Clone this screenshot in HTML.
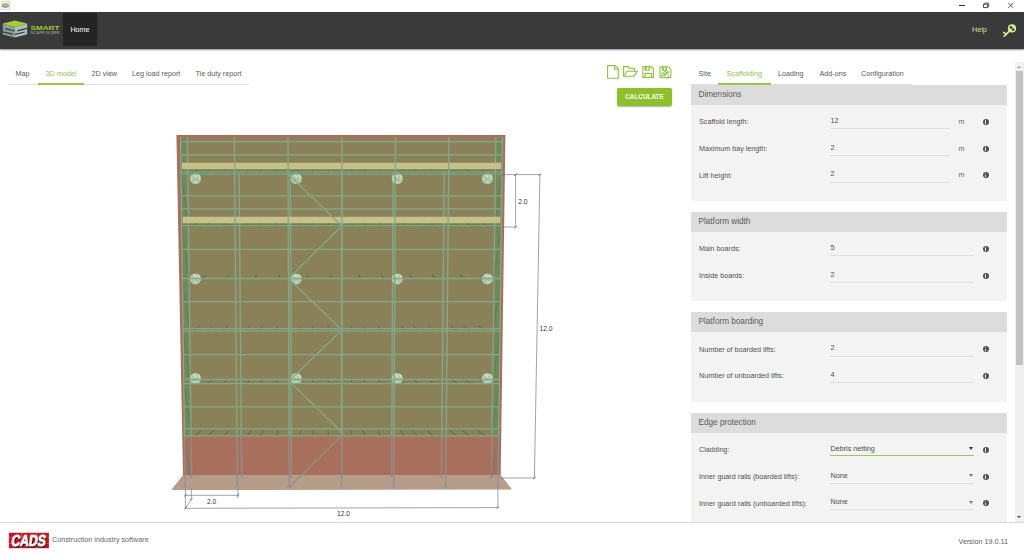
<!DOCTYPE html>
<html><head><meta charset="utf-8">
<style>
*{box-sizing:border-box;margin:0;padding:0}
html,body{width:1024px;height:555px;overflow:hidden;background:#fff;font-family:"Liberation Sans",sans-serif;color:#555;position:relative}
.a{position:absolute;white-space:nowrap}
#hdr{left:0;top:12px;width:1024px;height:37px;background:#3a3a3a;box-shadow:0 1px 1.5px rgba(0,0,0,.45)}
#home{left:63px;top:13px;width:34px;height:33px;background:#242424;color:#fff;font-size:7.2px;line-height:33px;text-align:center}
.tab{font-size:7.2px;color:#5a5a5a;line-height:10px}
.tab.on{color:#93c152}
.line{height:1px;background:#e2e2e2}
.gl{height:2px;background:#96c845}
.sec{left:691px;width:316px;background:#f3f3f3}
.sh{position:absolute;left:0;top:0;width:316px;height:20px;background:#dcdcdc;font-size:8.2px;color:#5a5a5a;line-height:20px;padding-left:7.5px}
.lab{font-size:7.2px;color:#505050;line-height:10px}
.val{font-size:7.2px;color:#4a4a4a;line-height:10px}
.ul{height:1px;background:#dedede}
.unit{font-size:7.2px;color:#666;line-height:10px}
.info{width:6.2px;height:6.2px;border-radius:50%;background:#505050;}
.info::before{content:"";position:absolute;left:2.6px;top:1.1px;width:1px;height:1px;background:#e8e8e8;border-radius:50%}
.info::after{content:"";position:absolute;left:2.6px;top:2.5px;width:1px;height:2.7px;background:#e8e8e8}
.arr{width:0;height:0;border-left:2.5px solid transparent;border-right:2.5px solid transparent;border-top:3px solid #333}
</style></head><body>
<!-- title bar -->
<div class="a" style="left:1px;top:1px;width:9px;height:9px;border:1px solid #dcdcdc;background:#fff"></div>
<div class="a" style="left:2px;top:2.5px;width:7px;height:5.5px;background:#9aaaae;border-top:2.2px solid #a6cf3a;border-radius:40%/30%"></div>
<div class="a" style="left:959.3px;top:5px;width:5.6px;height:0.9px;background:#333"></div>
<svg class="a" style="left:980px;top:0" width="44" height="12" viewBox="980 0 44 12">
<path d="M983.4 4.2H987.6V7.6H983.4Z" stroke="#333" stroke-width="0.9" fill="none"/>
<path d="M984.4 4.1V3.1H988.7V6.5H987.7" stroke="#333" stroke-width="0.8" fill="none"/>
<path d="M1008.2 2.9L1013.4 7.9M1013.4 2.9L1008.2 7.9" stroke="#333" stroke-width="0.8"/>
</svg>
<!-- header -->
<div class="a" id="hdr"></div>
<div class="a" id="home">Home</div>
<div class="a" style="left:972px;top:25px;font-size:7.2px;color:#d2e48c;line-height:10px">Help</div>

<!-- left tabs -->
<div class="a tab" style="left:15.5px;top:68.5px">Map</div>
<div class="a tab on" style="left:45.5px;top:68.5px">3D model</div>
<div class="a tab" style="left:91.5px;top:68.5px">2D view</div>
<div class="a tab" style="left:132px;top:68.5px">Leg load report</div>
<div class="a tab" style="left:195.5px;top:68.5px">Tie duty report</div>
<div class="a line" style="left:8px;top:84px;width:241px"></div>
<div class="a gl" style="left:38px;top:83px;width:46px"></div>

<!-- right tabs -->
<div class="a tab" style="left:698.5px;top:68.5px">Site</div>
<div class="a tab on" style="left:726.5px;top:68.5px">Scaffolding</div>
<div class="a tab" style="left:778px;top:68.5px">Loading</div>
<div class="a tab" style="left:819.5px;top:68.5px">Add-ons</div>
<div class="a tab" style="left:861px;top:68.5px">Configuration</div>
<div class="a line" style="left:690px;top:84px;width:222px"></div>
<div class="a gl" style="left:718px;top:83px;width:53px"></div>

<!-- calculate -->
<div class="a" style="left:617px;top:87.5px;width:55px;height:18.5px;background:#8cc12b;border-radius:2px;box-shadow:0 1px 1.5px rgba(0,0,0,.3);color:#fff;font-size:6.4px;line-height:18.5px;text-align:center;font-weight:bold">CALCULATE</div>

<!-- scaffold -->
<svg class="a" style="left:0;top:0" width="1024" height="555" viewBox="0 0 1024 555" font-family="Liberation Sans, sans-serif">
<polygon points="176.4,135 505.4,135 500.7,475 183,475" fill="#a8705c"/>
<polygon points="183,475 500.7,475 512,489.5 171.3,490" fill="#b89c8a"/>
<polygon points="180,138.5 502.2,138.5 499.2,436.3 184.2,436.3" fill="#8a8158"/>
<polygon points="180.5,139 187.3,139 191.1,436 184.5,436" fill="#74875a"/>
<polygon points="495.7,139 502.5,139 498.6,436 492.0,436" fill="#74875a"/>
<line x1="181.7" y1="226" x2="189.1" y2="279" stroke="#5e7d58" stroke-width="0.9"/>
<line x1="501.3" y1="226" x2="494.0" y2="279" stroke="#5e7d58" stroke-width="0.9"/>
<line x1="182.4" y1="279" x2="189.7" y2="330" stroke="#5e7d58" stroke-width="0.9"/>
<line x1="500.6" y1="279" x2="493.3" y2="330" stroke="#5e7d58" stroke-width="0.9"/>
<line x1="183.1" y1="330" x2="190.4" y2="381" stroke="#5e7d58" stroke-width="0.9"/>
<line x1="500.0" y1="330" x2="492.7" y2="381" stroke="#5e7d58" stroke-width="0.9"/>
<line x1="183.8" y1="381" x2="191.1" y2="432" stroke="#5e7d58" stroke-width="0.9"/>
<line x1="499.3" y1="381" x2="492.0" y2="432" stroke="#5e7d58" stroke-width="0.9"/>
<line x1="181.0" y1="174" x2="188.4" y2="226" stroke="#5e7d58" stroke-width="0.9"/>
<line x1="502.0" y1="174" x2="494.6" y2="226" stroke="#5e7d58" stroke-width="0.9"/>
<rect x="182" y="169.3" width="319" height="5.5" fill="#6f7f52"/>
<rect x="183" y="223.3" width="317" height="3.5" fill="#6f7f52"/>
<line x1="191.1" y1="436" x2="191.7" y2="478" stroke="#8e8e8e" stroke-width="1.2"/>
<rect x="189.7" y="477" width="4" height="1.4" fill="#9a9a9a"/>
<line x1="241.3" y1="436" x2="241.7" y2="478" stroke="#8e8e8e" stroke-width="1.2"/>
<rect x="239.7" y="477" width="4" height="1.4" fill="#9a9a9a"/>
<line x1="291.3" y1="436" x2="291.5" y2="478" stroke="#8e8e8e" stroke-width="1.2"/>
<rect x="289.5" y="477" width="4" height="1.4" fill="#9a9a9a"/>
<line x1="341.7" y1="436" x2="341.6" y2="478" stroke="#8e8e8e" stroke-width="1.2"/>
<rect x="339.6" y="477" width="4" height="1.4" fill="#9a9a9a"/>
<line x1="391.8" y1="436" x2="391.6" y2="478" stroke="#8e8e8e" stroke-width="1.2"/>
<rect x="389.6" y="477" width="4" height="1.4" fill="#9a9a9a"/>
<line x1="441.8" y1="436" x2="441.4" y2="478" stroke="#8e8e8e" stroke-width="1.2"/>
<rect x="439.4" y="477" width="4" height="1.4" fill="#9a9a9a"/>
<line x1="492.0" y1="436" x2="491.5" y2="478" stroke="#8e8e8e" stroke-width="1.2"/>
<rect x="489.5" y="477" width="4" height="1.4" fill="#9a9a9a"/>
<line x1="184" y1="437" x2="190.2" y2="476" stroke="#777" stroke-width="1"/>
<line x1="498" y1="437" x2="491.4" y2="477" stroke="#777" stroke-width="1"/>
<line x1="187.3" y1="137" x2="191.1" y2="436" stroke="#83a98a" stroke-width="1.3"/>
<line x1="239.1" y1="172" x2="241.3" y2="436" stroke="#83a98a" stroke-width="1.3"/>
<line x1="290.4" y1="172" x2="291.3" y2="436" stroke="#83a98a" stroke-width="1.3"/>
<line x1="342.0" y1="172" x2="341.7" y2="436" stroke="#83a98a" stroke-width="1.3"/>
<line x1="393.1" y1="172" x2="391.8" y2="436" stroke="#83a98a" stroke-width="1.3"/>
<line x1="444.2" y1="172" x2="441.8" y2="436" stroke="#83a98a" stroke-width="1.3"/>
<line x1="495.8" y1="137" x2="492.0" y2="436" stroke="#83a98a" stroke-width="1.3"/>
<line x1="191.7" y1="174.1" x2="196.9" y2="169.6" stroke="#4f7a56" stroke-width="1.1"/>
<line x1="205.1" y1="174.1" x2="209.8" y2="169.6" stroke="#4f7a56" stroke-width="1.1"/>
<line x1="221.2" y1="174.1" x2="225.2" y2="169.6" stroke="#4f7a56" stroke-width="1.1"/>
<line x1="245.3" y1="174.1" x2="248.3" y2="169.6" stroke="#4f7a56" stroke-width="1.1"/>
<line x1="258.7" y1="174.1" x2="261.2" y2="169.6" stroke="#4f7a56" stroke-width="1.1"/>
<line x1="274.8" y1="174.1" x2="276.6" y2="169.6" stroke="#4f7a56" stroke-width="1.1"/>
<line x1="298.9" y1="174.1" x2="299.8" y2="169.6" stroke="#4f7a56" stroke-width="1.1"/>
<line x1="312.4" y1="174.1" x2="312.7" y2="169.6" stroke="#4f7a56" stroke-width="1.1"/>
<line x1="328.5" y1="174.1" x2="328.2" y2="169.6" stroke="#4f7a56" stroke-width="1.1"/>
<line x1="352.6" y1="174.1" x2="351.3" y2="169.6" stroke="#4f7a56" stroke-width="1.1"/>
<line x1="366.0" y1="174.1" x2="364.1" y2="169.6" stroke="#4f7a56" stroke-width="1.1"/>
<line x1="382.0" y1="174.1" x2="379.5" y2="169.6" stroke="#4f7a56" stroke-width="1.1"/>
<line x1="406.0" y1="174.1" x2="402.5" y2="169.6" stroke="#4f7a56" stroke-width="1.1"/>
<line x1="419.3" y1="174.1" x2="415.3" y2="169.6" stroke="#4f7a56" stroke-width="1.1"/>
<line x1="435.3" y1="174.1" x2="430.7" y2="169.6" stroke="#4f7a56" stroke-width="1.1"/>
<line x1="459.3" y1="174.1" x2="453.7" y2="169.6" stroke="#4f7a56" stroke-width="1.1"/>
<line x1="472.7" y1="174.1" x2="466.5" y2="169.6" stroke="#4f7a56" stroke-width="1.1"/>
<line x1="488.7" y1="174.1" x2="481.9" y2="169.6" stroke="#4f7a56" stroke-width="1.1"/>
<line x1="192.4" y1="226.5" x2="197.5" y2="222.0" stroke="#4f7a56" stroke-width="1.1"/>
<line x1="205.7" y1="226.5" x2="210.3" y2="222.0" stroke="#4f7a56" stroke-width="1.1"/>
<line x1="221.7" y1="226.5" x2="225.7" y2="222.0" stroke="#4f7a56" stroke-width="1.1"/>
<line x1="245.7" y1="226.5" x2="248.7" y2="222.0" stroke="#4f7a56" stroke-width="1.1"/>
<line x1="259.0" y1="226.5" x2="261.5" y2="222.0" stroke="#4f7a56" stroke-width="1.1"/>
<line x1="275.0" y1="226.5" x2="276.8" y2="222.0" stroke="#4f7a56" stroke-width="1.1"/>
<line x1="299.0" y1="226.5" x2="299.9" y2="222.0" stroke="#4f7a56" stroke-width="1.1"/>
<line x1="312.4" y1="226.5" x2="312.7" y2="222.0" stroke="#4f7a56" stroke-width="1.1"/>
<line x1="328.5" y1="226.5" x2="328.2" y2="222.0" stroke="#4f7a56" stroke-width="1.1"/>
<line x1="352.5" y1="226.5" x2="351.2" y2="222.0" stroke="#4f7a56" stroke-width="1.1"/>
<line x1="365.8" y1="226.5" x2="364.0" y2="222.0" stroke="#4f7a56" stroke-width="1.1"/>
<line x1="381.8" y1="226.5" x2="379.3" y2="222.0" stroke="#4f7a56" stroke-width="1.1"/>
<line x1="405.7" y1="226.5" x2="402.2" y2="222.0" stroke="#4f7a56" stroke-width="1.1"/>
<line x1="418.9" y1="226.5" x2="414.9" y2="222.0" stroke="#4f7a56" stroke-width="1.1"/>
<line x1="434.9" y1="226.5" x2="430.2" y2="222.0" stroke="#4f7a56" stroke-width="1.1"/>
<line x1="458.8" y1="226.5" x2="453.2" y2="222.0" stroke="#4f7a56" stroke-width="1.1"/>
<line x1="472.1" y1="226.5" x2="465.9" y2="222.0" stroke="#4f7a56" stroke-width="1.1"/>
<line x1="488.0" y1="226.5" x2="481.2" y2="222.0" stroke="#4f7a56" stroke-width="1.1"/>
<line x1="193.7" y1="331.2" x2="199.9" y2="325.7" stroke="#4f7a56" stroke-width="1.1"/>
<line x1="206.9" y1="331.2" x2="212.5" y2="325.7" stroke="#4f7a56" stroke-width="1.1"/>
<line x1="222.8" y1="331.2" x2="227.6" y2="325.7" stroke="#4f7a56" stroke-width="1.1"/>
<line x1="246.6" y1="331.2" x2="250.2" y2="325.7" stroke="#4f7a56" stroke-width="1.1"/>
<line x1="259.7" y1="331.2" x2="262.7" y2="325.7" stroke="#4f7a56" stroke-width="1.1"/>
<line x1="275.5" y1="331.2" x2="277.7" y2="325.7" stroke="#4f7a56" stroke-width="1.1"/>
<line x1="299.3" y1="331.2" x2="300.4" y2="325.7" stroke="#4f7a56" stroke-width="1.1"/>
<line x1="312.6" y1="331.2" x2="313.0" y2="325.7" stroke="#4f7a56" stroke-width="1.1"/>
<line x1="328.5" y1="331.2" x2="328.1" y2="325.7" stroke="#4f7a56" stroke-width="1.1"/>
<line x1="352.3" y1="331.2" x2="350.7" y2="325.7" stroke="#4f7a56" stroke-width="1.1"/>
<line x1="365.5" y1="331.2" x2="363.3" y2="325.7" stroke="#4f7a56" stroke-width="1.1"/>
<line x1="381.3" y1="331.2" x2="378.3" y2="325.7" stroke="#4f7a56" stroke-width="1.1"/>
<line x1="405.0" y1="331.2" x2="400.8" y2="325.7" stroke="#4f7a56" stroke-width="1.1"/>
<line x1="418.2" y1="331.2" x2="413.3" y2="325.7" stroke="#4f7a56" stroke-width="1.1"/>
<line x1="434.0" y1="331.2" x2="428.4" y2="325.7" stroke="#4f7a56" stroke-width="1.1"/>
<line x1="457.7" y1="331.2" x2="450.9" y2="325.7" stroke="#4f7a56" stroke-width="1.1"/>
<line x1="470.9" y1="331.2" x2="463.5" y2="325.7" stroke="#4f7a56" stroke-width="1.1"/>
<line x1="486.8" y1="331.2" x2="478.5" y2="325.7" stroke="#4f7a56" stroke-width="1.1"/>
<line x1="194.3" y1="383.8" x2="200.6" y2="378.3" stroke="#4f7a56" stroke-width="1.1"/>
<line x1="207.5" y1="383.8" x2="213.1" y2="378.3" stroke="#4f7a56" stroke-width="1.1"/>
<line x1="223.3" y1="383.8" x2="228.1" y2="378.3" stroke="#4f7a56" stroke-width="1.1"/>
<line x1="247.0" y1="383.8" x2="250.6" y2="378.3" stroke="#4f7a56" stroke-width="1.1"/>
<line x1="260.1" y1="383.8" x2="263.0" y2="378.3" stroke="#4f7a56" stroke-width="1.1"/>
<line x1="275.8" y1="383.8" x2="278.0" y2="378.3" stroke="#4f7a56" stroke-width="1.1"/>
<line x1="299.5" y1="383.8" x2="300.5" y2="378.3" stroke="#4f7a56" stroke-width="1.1"/>
<line x1="312.7" y1="383.8" x2="313.0" y2="378.3" stroke="#4f7a56" stroke-width="1.1"/>
<line x1="328.5" y1="383.8" x2="328.1" y2="378.3" stroke="#4f7a56" stroke-width="1.1"/>
<line x1="352.2" y1="383.8" x2="350.6" y2="378.3" stroke="#4f7a56" stroke-width="1.1"/>
<line x1="365.4" y1="383.8" x2="363.1" y2="378.3" stroke="#4f7a56" stroke-width="1.1"/>
<line x1="381.1" y1="383.8" x2="378.1" y2="378.3" stroke="#4f7a56" stroke-width="1.1"/>
<line x1="404.7" y1="383.8" x2="400.5" y2="378.3" stroke="#4f7a56" stroke-width="1.1"/>
<line x1="417.8" y1="383.8" x2="413.0" y2="378.3" stroke="#4f7a56" stroke-width="1.1"/>
<line x1="433.6" y1="383.8" x2="427.9" y2="378.3" stroke="#4f7a56" stroke-width="1.1"/>
<line x1="457.2" y1="383.8" x2="450.4" y2="378.3" stroke="#4f7a56" stroke-width="1.1"/>
<line x1="470.3" y1="383.8" x2="462.9" y2="378.3" stroke="#4f7a56" stroke-width="1.1"/>
<line x1="486.1" y1="383.8" x2="477.9" y2="378.3" stroke="#4f7a56" stroke-width="1.1"/>
<line x1="195.0" y1="436.0" x2="201.2" y2="430.5" stroke="#4f7a56" stroke-width="1.1"/>
<line x1="208.1" y1="436.0" x2="213.6" y2="430.5" stroke="#4f7a56" stroke-width="1.1"/>
<line x1="223.8" y1="436.0" x2="228.6" y2="430.5" stroke="#4f7a56" stroke-width="1.1"/>
<line x1="247.4" y1="436.0" x2="251.0" y2="430.5" stroke="#4f7a56" stroke-width="1.1"/>
<line x1="260.4" y1="436.0" x2="263.4" y2="430.5" stroke="#4f7a56" stroke-width="1.1"/>
<line x1="276.1" y1="436.0" x2="278.2" y2="430.5" stroke="#4f7a56" stroke-width="1.1"/>
<line x1="299.6" y1="436.0" x2="300.6" y2="430.5" stroke="#4f7a56" stroke-width="1.1"/>
<line x1="312.8" y1="436.0" x2="313.1" y2="430.5" stroke="#4f7a56" stroke-width="1.1"/>
<line x1="328.5" y1="436.0" x2="328.1" y2="430.5" stroke="#4f7a56" stroke-width="1.1"/>
<line x1="352.1" y1="436.0" x2="350.5" y2="430.5" stroke="#4f7a56" stroke-width="1.1"/>
<line x1="365.2" y1="436.0" x2="363.0" y2="430.5" stroke="#4f7a56" stroke-width="1.1"/>
<line x1="380.9" y1="436.0" x2="377.9" y2="430.5" stroke="#4f7a56" stroke-width="1.1"/>
<line x1="404.4" y1="436.0" x2="400.2" y2="430.5" stroke="#4f7a56" stroke-width="1.1"/>
<line x1="417.5" y1="436.0" x2="412.6" y2="430.5" stroke="#4f7a56" stroke-width="1.1"/>
<line x1="433.1" y1="436.0" x2="427.5" y2="430.5" stroke="#4f7a56" stroke-width="1.1"/>
<line x1="456.7" y1="436.0" x2="449.9" y2="430.5" stroke="#4f7a56" stroke-width="1.1"/>
<line x1="469.8" y1="436.0" x2="462.4" y2="430.5" stroke="#4f7a56" stroke-width="1.1"/>
<line x1="485.5" y1="436.0" x2="477.3" y2="430.5" stroke="#4f7a56" stroke-width="1.1"/>
<line x1="201.0" y1="279.5" x2="206.4" y2="274.5" stroke="#4f7a56" stroke-width="1.1"/>
<line x1="224.9" y1="279.5" x2="229.2" y2="274.5" stroke="#4f7a56" stroke-width="1.1"/>
<line x1="254.1" y1="279.5" x2="257.1" y2="274.5" stroke="#4f7a56" stroke-width="1.1"/>
<line x1="277.9" y1="279.5" x2="279.8" y2="274.5" stroke="#4f7a56" stroke-width="1.1"/>
<line x1="307.2" y1="279.5" x2="307.8" y2="274.5" stroke="#4f7a56" stroke-width="1.1"/>
<line x1="331.2" y1="279.5" x2="330.7" y2="274.5" stroke="#4f7a56" stroke-width="1.1"/>
<line x1="360.4" y1="279.5" x2="358.5" y2="274.5" stroke="#4f7a56" stroke-width="1.1"/>
<line x1="384.2" y1="279.5" x2="381.3" y2="274.5" stroke="#4f7a56" stroke-width="1.1"/>
<line x1="413.3" y1="279.5" x2="409.1" y2="274.5" stroke="#4f7a56" stroke-width="1.1"/>
<line x1="437.1" y1="279.5" x2="431.8" y2="274.5" stroke="#4f7a56" stroke-width="1.1"/>
<line x1="466.2" y1="279.5" x2="459.6" y2="274.5" stroke="#4f7a56" stroke-width="1.1"/>
<line x1="490.0" y1="279.5" x2="482.4" y2="274.5" stroke="#4f7a56" stroke-width="1.1"/>
<polygon points="181.8,162.8 501.2,162.8 501.1,169.3 181.9,169.3" fill="#c5c188"/>
<polygon points="182.6,216.8 500.5,216.8 500.4,223.3 182.6,223.3" fill="#c5c188"/>
<circle cx="195.5" cy="178.5" r="5.5" fill="#b6cfb2"/>
<path d="M192.0 175.5L199.0 181.5M199.0 175.5L192.0 181.5" stroke="#8fb08f" stroke-width="0.9"/>
<path d="M193.0 174.5L196.5 177.5M198.0 174.5L199.5 177.5" stroke="#d3e4cf" stroke-width="1.3"/>
<circle cx="296.3" cy="178.5" r="5.5" fill="#b6cfb2"/>
<path d="M292.8 175.5L299.8 181.5M299.8 175.5L292.8 181.5" stroke="#8fb08f" stroke-width="0.9"/>
<path d="M293.8 174.5L297.3 177.5M298.8 174.5L300.3 177.5" stroke="#d3e4cf" stroke-width="1.3"/>
<circle cx="397.3" cy="178.5" r="5.5" fill="#b6cfb2"/>
<path d="M393.8 175.5L400.8 181.5M400.8 175.5L393.8 181.5" stroke="#8fb08f" stroke-width="0.9"/>
<path d="M394.8 174.5L398.3 177.5M399.8 174.5L401.3 177.5" stroke="#d3e4cf" stroke-width="1.3"/>
<circle cx="487.4" cy="178.5" r="5.5" fill="#b6cfb2"/>
<path d="M483.9 175.5L490.9 181.5M490.9 175.5L483.9 181.5" stroke="#8fb08f" stroke-width="0.9"/>
<path d="M484.9 174.5L488.4 177.5M489.9 174.5L491.4 177.5" stroke="#d3e4cf" stroke-width="1.3"/>
<circle cx="195.5" cy="278.9" r="5.5" fill="#b6cfb2"/>
<path d="M192.0 275.9L199.0 281.9M199.0 275.9L192.0 281.9" stroke="#8fb08f" stroke-width="0.9"/>
<path d="M193.0 274.9L196.5 277.9M198.0 274.9L199.5 277.9" stroke="#d3e4cf" stroke-width="1.3"/>
<circle cx="296.3" cy="278.9" r="5.5" fill="#b6cfb2"/>
<path d="M292.8 275.9L299.8 281.9M299.8 275.9L292.8 281.9" stroke="#8fb08f" stroke-width="0.9"/>
<path d="M293.8 274.9L297.3 277.9M298.8 274.9L300.3 277.9" stroke="#d3e4cf" stroke-width="1.3"/>
<circle cx="397.3" cy="278.9" r="5.5" fill="#b6cfb2"/>
<path d="M393.8 275.9L400.8 281.9M400.8 275.9L393.8 281.9" stroke="#8fb08f" stroke-width="0.9"/>
<path d="M394.8 274.9L398.3 277.9M399.8 274.9L401.3 277.9" stroke="#d3e4cf" stroke-width="1.3"/>
<circle cx="487.4" cy="278.9" r="5.5" fill="#b6cfb2"/>
<path d="M483.9 275.9L490.9 281.9M490.9 275.9L483.9 281.9" stroke="#8fb08f" stroke-width="0.9"/>
<path d="M484.9 274.9L488.4 277.9M489.9 274.9L491.4 277.9" stroke="#d3e4cf" stroke-width="1.3"/>
<circle cx="195.5" cy="378.5" r="5.5" fill="#b6cfb2"/>
<path d="M192.0 375.5L199.0 381.5M199.0 375.5L192.0 381.5" stroke="#8fb08f" stroke-width="0.9"/>
<path d="M193.0 374.5L196.5 377.5M198.0 374.5L199.5 377.5" stroke="#d3e4cf" stroke-width="1.3"/>
<circle cx="296.3" cy="378.5" r="5.5" fill="#b6cfb2"/>
<path d="M292.8 375.5L299.8 381.5M299.8 375.5L292.8 381.5" stroke="#8fb08f" stroke-width="0.9"/>
<path d="M293.8 374.5L297.3 377.5M298.8 374.5L300.3 377.5" stroke="#d3e4cf" stroke-width="1.3"/>
<circle cx="397.3" cy="378.5" r="5.5" fill="#b6cfb2"/>
<path d="M393.8 375.5L400.8 381.5M400.8 375.5L393.8 381.5" stroke="#8fb08f" stroke-width="0.9"/>
<path d="M394.8 374.5L398.3 377.5M399.8 374.5L401.3 377.5" stroke="#d3e4cf" stroke-width="1.3"/>
<circle cx="487.4" cy="378.5" r="5.5" fill="#b6cfb2"/>
<path d="M483.9 375.5L490.9 381.5M490.9 375.5L483.9 381.5" stroke="#8fb08f" stroke-width="0.9"/>
<path d="M484.9 374.5L488.4 377.5M489.9 374.5L491.4 377.5" stroke="#d3e4cf" stroke-width="1.3"/>
<line x1="180.5" y1="141.7" x2="502.5" y2="141.7" stroke="#83a98a" stroke-width="1.3"/>
<line x1="180.7" y1="154.9" x2="502.3" y2="154.9" stroke="#83a98a" stroke-width="1.3"/>
<line x1="181.0" y1="171.8" x2="502.1" y2="171.8" stroke="#83a98a" stroke-width="1.3"/>
<line x1="181.0" y1="174.1" x2="502.0" y2="174.1" stroke="#83a98a" stroke-width="1.3"/>
<line x1="181.3" y1="195.8" x2="501.7" y2="195.8" stroke="#83a98a" stroke-width="1.3"/>
<line x1="181.5" y1="208.9" x2="501.6" y2="208.9" stroke="#83a98a" stroke-width="1.3"/>
<line x1="181.7" y1="225.7" x2="501.3" y2="225.7" stroke="#83a98a" stroke-width="1.3"/>
<line x1="182.0" y1="249.3" x2="501.0" y2="249.3" stroke="#83a98a" stroke-width="1.3"/>
<line x1="182.4" y1="278.5" x2="500.7" y2="278.5" stroke="#83a98a" stroke-width="1.3"/>
<line x1="182.7" y1="301.7" x2="500.3" y2="301.7" stroke="#83a98a" stroke-width="1.3"/>
<line x1="183.1" y1="328.6" x2="500.0" y2="328.6" stroke="#83a98a" stroke-width="1.3"/>
<line x1="183.1" y1="330.9" x2="500.0" y2="330.9" stroke="#83a98a" stroke-width="1.3"/>
<line x1="183.4" y1="354.7" x2="499.6" y2="354.7" stroke="#83a98a" stroke-width="1.3"/>
<line x1="183.7" y1="379.5" x2="499.3" y2="379.5" stroke="#83a98a" stroke-width="1.3"/>
<line x1="183.8" y1="383.6" x2="499.3" y2="383.6" stroke="#83a98a" stroke-width="1.3"/>
<line x1="184.1" y1="406.8" x2="499.0" y2="406.8" stroke="#83a98a" stroke-width="1.3"/>
<line x1="184.4" y1="428.8" x2="498.7" y2="428.8" stroke="#83a98a" stroke-width="1.3"/>
<line x1="184.5" y1="435.9" x2="498.6" y2="435.9" stroke="#83a98a" stroke-width="1.3"/>
<line x1="180.5" y1="137" x2="184.5" y2="436" stroke="#83a98a" stroke-width="1.3"/>
<line x1="184.5" y1="436" x2="185.2" y2="487.6" stroke="#8e8e8e" stroke-width="1.3"/>
<rect x="182.7" y="486.6" width="5" height="1.6" fill="#9a9a9a"/>
<line x1="234.3" y1="137" x2="236.9" y2="436" stroke="#83a98a" stroke-width="1.3"/>
<line x1="236.9" y1="436" x2="237.4" y2="487.6" stroke="#8e8e8e" stroke-width="1.3"/>
<rect x="234.9" y="486.6" width="5" height="1.6" fill="#9a9a9a"/>
<line x1="288.0" y1="137" x2="289.1" y2="436" stroke="#83a98a" stroke-width="1.3"/>
<line x1="289.1" y1="436" x2="289.3" y2="487.6" stroke="#8e8e8e" stroke-width="1.3"/>
<rect x="286.8" y="486.6" width="5" height="1.6" fill="#9a9a9a"/>
<line x1="342.0" y1="137" x2="341.7" y2="436" stroke="#83a98a" stroke-width="1.3"/>
<line x1="341.7" y1="436" x2="341.6" y2="487.6" stroke="#8e8e8e" stroke-width="1.3"/>
<rect x="339.1" y="486.6" width="5" height="1.6" fill="#9a9a9a"/>
<line x1="395.5" y1="137" x2="394.0" y2="436" stroke="#83a98a" stroke-width="1.3"/>
<line x1="394.0" y1="436" x2="393.7" y2="487.6" stroke="#8e8e8e" stroke-width="1.3"/>
<rect x="391.2" y="486.6" width="5" height="1.6" fill="#9a9a9a"/>
<line x1="449.0" y1="137" x2="446.2" y2="436" stroke="#83a98a" stroke-width="1.3"/>
<line x1="446.2" y1="436" x2="445.7" y2="487.6" stroke="#8e8e8e" stroke-width="1.3"/>
<rect x="443.2" y="486.6" width="5" height="1.6" fill="#9a9a9a"/>
<line x1="502.5" y1="137" x2="498.6" y2="436" stroke="#83a98a" stroke-width="1.3"/>
<line x1="498.6" y1="436" x2="497.9" y2="487.6" stroke="#8e8e8e" stroke-width="1.3"/>
<rect x="495.4" y="486.6" width="5" height="1.6" fill="#9a9a9a"/>
<line x1="288.1" y1="174" x2="341.9" y2="226" stroke="#83a98a" stroke-width="1.3"/>
<line x1="341.9" y1="226" x2="288.5" y2="278.5" stroke="#83a98a" stroke-width="1.3"/>
<line x1="288.5" y1="278.5" x2="341.8" y2="330" stroke="#83a98a" stroke-width="1.3"/>
<line x1="341.8" y1="330" x2="288.9" y2="381" stroke="#83a98a" stroke-width="1.3"/>
<line x1="288.9" y1="381" x2="341.7" y2="432" stroke="#83a98a" stroke-width="1.3"/>
<line x1="341.7" y1="436" x2="289.3" y2="487" stroke="#8e8e8e" stroke-width="1.3"/>
<g stroke="#666" stroke-width="0.6" fill="none">
<path d="M502.7 174.6H539.9M502.7 227H516M515.6 174.6V227"/>
<path d="M539.9 174.6L534.4 478M500.7 478H534.4"/>
<path d="M185.4 489V508.3M238 489V498M185.4 495.3H238M185.4 508.3L497.9 507.6M497.9 489V507.6M191.3 489V499.3L185.4 508.3"/>
<path d="M514.3000000000001 175.7L516.9 173.5" stroke-width="0.9"/>
<path d="M538.6 175.7L541.1999999999999 173.5" stroke-width="0.9"/>
<path d="M514.3000000000001 228.1L516.9 225.9" stroke-width="0.9"/>
<path d="M533.1 479.1L535.6999999999999 476.9" stroke-width="0.9"/>
<path d="M184.1 496.40000000000003L186.70000000000002 494.2" stroke-width="0.9"/>
<path d="M236.7 496.40000000000003L239.3 494.2" stroke-width="0.9"/>
<path d="M184.1 509.40000000000003L186.70000000000002 507.2" stroke-width="0.9"/>
<path d="M496.59999999999997 508.70000000000005L499.2 506.5" stroke-width="0.9"/>
<path d="M190.0 500.40000000000003L192.60000000000002 498.2" stroke-width="0.9"/>
</g>
<text x="518.2" y="204" font-size="6.7" fill="#333">2.0</text>
<text x="539.5" y="331" font-size="6.7" fill="#333">12.0</text>
<text x="207" y="503.5" font-size="6.7" fill="#333">2.0</text>
<text x="337" y="516" font-size="6.7" fill="#333">12.0</text>
</svg>
<!-- /scaffold -->
<!-- icons -->
<svg class="a" style="left:0;top:0" width="1024" height="555" viewBox="0 0 1024 555" font-family="Liberation Sans, sans-serif">
<!-- logo -->
<polygon points="2.8,23.6 14.9,26.9 14.9,37.4 2.8,34.5" fill="#86a0a0"/>
<polygon points="14.9,26.9 27.2,23.6 27.2,34.3 14.9,37.4" fill="#abbfbf"/>
<polygon points="2.8,23.6 14.9,20.4 27.2,23.6 14.9,26.9" fill="#a5cf2a"/>
<g stroke="#3a3a3a" stroke-width="1.15" fill="none">
<path d="M5 28.6L14.9 31.0M2.8 31.9L12.9 34.1"/>
<path d="M17.3 30.9L27.2 28.4M14.9 34.4L24.8 32.0"/>
</g>
<text x="30.6" y="29.9" font-size="6" font-weight="bold" fill="#a5cf2a" textLength="28.8" lengthAdjust="spacingAndGlyphs">SMART</text>
<text x="30.6" y="34" font-size="3.95" font-weight="bold" fill="#7e9494" textLength="28.8" lengthAdjust="spacingAndGlyphs">SCAFFOLDER</text>
<!-- key -->
<circle cx="1012" cy="28.4" r="4.1" fill="#d8ec8c"/>
<circle cx="1011.0" cy="27.4" r="1.35" fill="#3a3a3a"/>
<circle cx="1013.1" cy="29.5" r="1.35" fill="#3a3a3a"/>
<g stroke="#d8ec8c" fill="none" stroke-linecap="round">
<path d="M1009.6 30.9L1004.3 36.1" stroke-width="1.8"/>
<path d="M1006 34.2L1003.6 32.4" stroke-width="1.6"/>
</g>
<!-- file icons -->
<g stroke="#8dc23a" stroke-width="1.1" fill="none" stroke-linejoin="round">
<path d="M607.6 65.6H615.4L618.3 68.6V78.3H607.6Z"/>
<path d="M614.6 65.8V69.2H618.2"/>
<path d="M623.6 76.2V66.6H628.4L629.2 68.2H634.4V71"/>
<path d="M623.6 76.2L627 71.3H637.4L633.8 76.2Z"/>
<path d="M642.8 66.5H651L653.4 69V77.4H642.8Z"/>
<path d="M645 77.2V73.4H651.4V77.2"/>
<path d="M659.9 66.8H668.1L670.8 69.4V77.8H659.9Z"/>
<path d="M662 77.6V74L666.2 70.6"/>
</g>
<rect x="644.5" y="66.5" width="5.4" height="4.1" fill="#8dc23a"/>
<rect x="646.6" y="67.3" width="1.9" height="2.4" fill="#fff"/>
<rect x="661.8" y="66.8" width="5.2" height="4" fill="#8dc23a"/>
<rect x="663.8" y="67.6" width="1.8" height="2.2" fill="#fff"/>
<path d="M663.5 76L668.5 71.5" stroke="#8dc23a" stroke-width="1.8"/>
<path d="M664.5 77.6H668.8V74.3" stroke="#8dc23a" stroke-width="1" fill="none"/>
<!-- CADS -->
<rect x="8.9" y="532.8" width="40" height="15.4" fill="#d0121f"/>
<path d="M8.9 537.3H48.9M8.9 543.5H48.9" stroke="#e9858c" stroke-width="0.5"/>
<path d="M21.5 532.8V548.2M36.8 532.8V548.2" stroke="#ee9aa0" stroke-width="0.5"/>
<g transform="translate(0 546.6) skewX(-9) translate(0 -546.6)">
<text x="11.4" y="546.7" font-size="15.8" font-weight="bold" fill="#111" stroke="#111" stroke-width="0.7" textLength="34.5" lengthAdjust="spacingAndGlyphs">CADS</text>
<text x="10.6" y="545.9" font-size="15.8" font-weight="bold" fill="#fff" stroke="#fff" stroke-width="0.7" textLength="34.5" lengthAdjust="spacingAndGlyphs">CADS</text>
</g>
</svg>
<!-- /icons -->
<!-- right panel -->
<div class="a sec" style="top:85px;height:116px"><div class="sh">Dimensions</div></div>
<div class="a lab" style="left:699px;top:117.4px">Scaffold length:</div>
<div class="a val" style="left:830.5px;top:115.5px">12</div>
<div class="a ul" style="left:830px;top:128px;width:120px"></div>
<div class="a unit" style="left:958.5px;top:116.5px">m</div>
<div class="a info" style="left:982.8px;top:118.8px"></div>
<div class="a lab" style="left:699px;top:144.4px">Maximum bay length:</div>
<div class="a val" style="left:830.5px;top:142.5px">2</div>
<div class="a ul" style="left:830px;top:155px;width:120px"></div>
<div class="a unit" style="left:958.5px;top:143.5px">m</div>
<div class="a info" style="left:982.8px;top:145.8px"></div>
<div class="a lab" style="left:699px;top:170.9px">Lift height:</div>
<div class="a val" style="left:830.5px;top:169.0px">2</div>
<div class="a ul" style="left:830px;top:181.5px;width:120px"></div>
<div class="a unit" style="left:958.5px;top:170.0px">m</div>
<div class="a info" style="left:982.8px;top:172.3px"></div>
<div class="a sec" style="top:212px;height:89px"><div class="sh">Platform width</div></div>
<div class="a lab" style="left:699px;top:244.4px">Main boards:</div>
<div class="a val" style="left:830.5px;top:242.5px">5</div>
<div class="a ul" style="left:830px;top:255px;width:144px"></div>
<div class="a info" style="left:982.8px;top:245.8px"></div>
<div class="a lab" style="left:699px;top:271.4px">Inside boards:</div>
<div class="a val" style="left:830.5px;top:269.5px">2</div>
<div class="a ul" style="left:830px;top:282px;width:144px"></div>
<div class="a info" style="left:982.8px;top:272.8px"></div>
<div class="a sec" style="top:312px;height:90px"><div class="sh">Platform boarding</div></div>
<div class="a lab" style="left:699px;top:344.9px">Number of boarded lifts:</div>
<div class="a val" style="left:830.5px;top:343.0px">2</div>
<div class="a ul" style="left:830px;top:355.5px;width:144px"></div>
<div class="a info" style="left:982.8px;top:346.3px"></div>
<div class="a lab" style="left:699px;top:371.4px">Number of unboarded lifts:</div>
<div class="a val" style="left:830.5px;top:369.5px">4</div>
<div class="a ul" style="left:830px;top:382px;width:144px"></div>
<div class="a info" style="left:982.8px;top:372.8px"></div>
<div class="a sec" style="top:412.5px;height:110px"><div class="sh">Edge protection</div></div>
<div class="a lab" style="left:699px;top:445.4px">Cladding:</div>
<div class="a val" style="left:830.5px;top:443.5px">Debris netting</div>
<div class="a" style="left:830px;top:455px;width:144px;height:1.4px;background:#9ccc45"></div>
<div class="a arr" style="left:968.5px;top:447px"></div>
<div class="a info" style="left:982.8px;top:446.8px"></div>
<div class="a lab" style="left:699px;top:472.4px">Inner guard rails (boarded lifts):</div>
<div class="a val" style="left:830.5px;top:470.5px">None</div>
<div class="a ul" style="left:830px;top:482.5px;width:144px"></div>
<div class="a arr" style="left:968.5px;top:474px;border-top-color:#777"></div>
<div class="a info" style="left:982.8px;top:473.8px"></div>
<div class="a lab" style="left:699px;top:498.9px">Inner guard rails (unboarded lifts):</div>
<div class="a val" style="left:830.5px;top:497.0px">None</div>
<div class="a ul" style="left:830px;top:509.0px;width:144px"></div>
<div class="a arr" style="left:968.5px;top:500.5px;border-top-color:#777"></div>
<div class="a info" style="left:982.8px;top:500.3px"></div>

<!-- scrollbar -->
<div class="a" style="left:1015px;top:62px;width:9px;height:461px;background:#f0f0f0"></div>
<div class="a" style="left:1016px;top:71px;width:7px;height:294px;background:#c1c1c1"></div>
<div class="a" style="left:1017px;top:65.5px;width:0;height:0;border-left:2.5px solid transparent;border-right:2.5px solid transparent;border-bottom:2.8px solid #9a9a9a"></div>
<div class="a" style="left:1016.8px;top:515.5px;width:0;height:0;border-left:2.7px solid transparent;border-right:2.7px solid transparent;border-top:2.8px solid #444"></div>

<!-- footer -->
<div class="a" style="left:0;top:522px;width:1024px;height:1px;background:#d8d8d8"></div>
<div class="a" style="left:52px;top:535px;font-size:7.2px;color:#666;line-height:10px">Construction industry software</div>
<div class="a" style="left:958.5px;top:536.8px;font-size:7.2px;color:#5a5a5a;line-height:10px">Version 19.0.11</div>

</body></html>
